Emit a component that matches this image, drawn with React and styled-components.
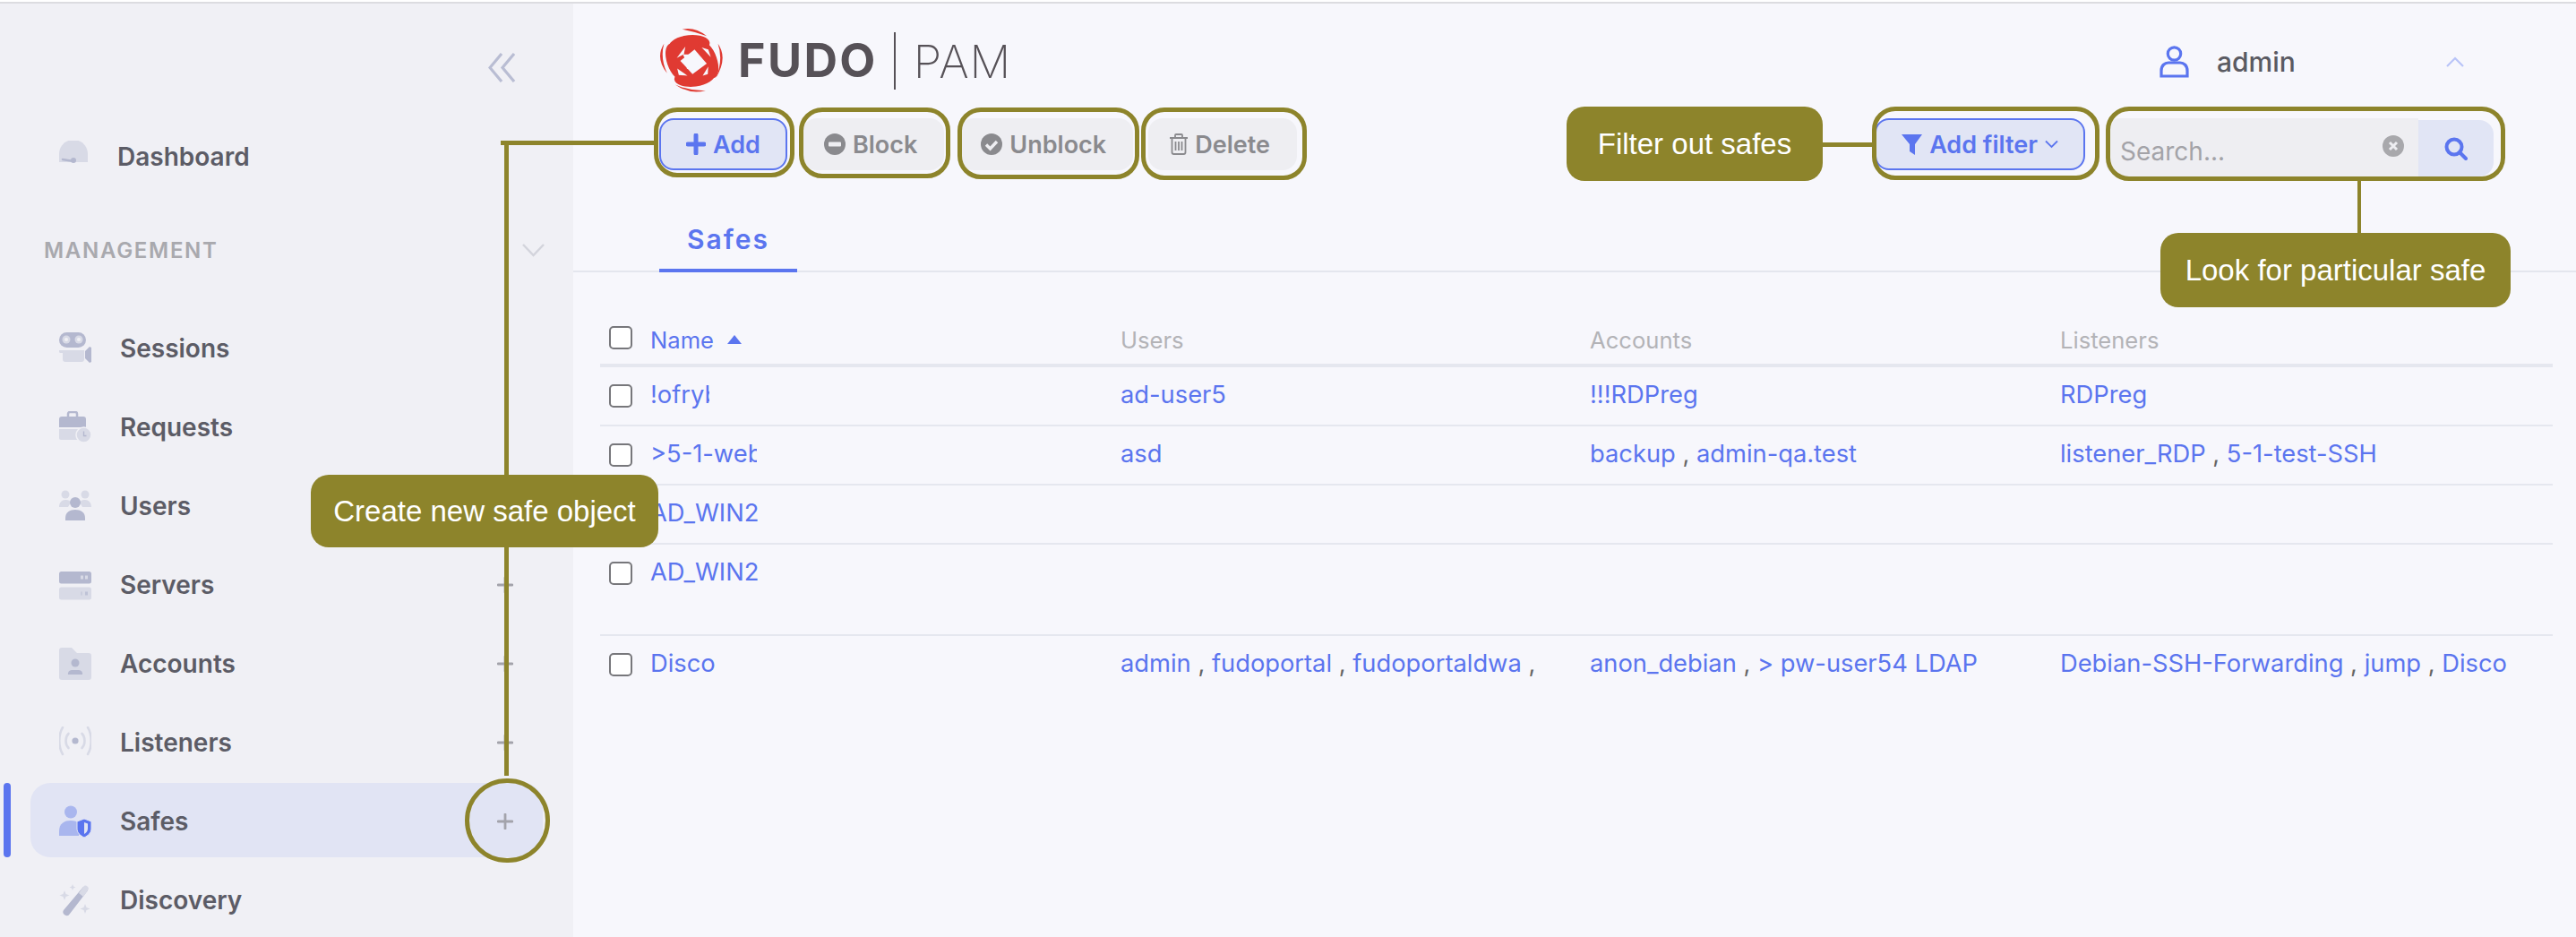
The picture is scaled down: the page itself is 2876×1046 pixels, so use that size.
import React from 'react';
import styled, { createGlobalStyle } from 'styled-components';

const BLUE = '#5b75ef';
const OLIVE = '#8d842b';
const DARK = '#b4b8cf';
const LIGHT = '#d8dae6';

const Global = createGlobalStyle`
  html, body { margin: 0; padding: 0; background: #f7f7fc; }
  body { font-family: Inter, "Liberation Sans", sans-serif; }
  * { box-sizing: border-box; }
`;

const Page = styled.div`
  position: relative;
  width: 2876px;
  height: 1046px;
  overflow: hidden;
  display: flex;
  flex-direction: column;
`;
const TopEdge = styled.div`
  height: 4px;
  flex: none;
  background: #fff;
  border-bottom: 2px solid #dcdce0;
`;
const Body = styled.div`
  flex: 1;
  display: flex;
  min-height: 0;
`;

/* ---------- sidebar ---------- */
const Sidebar = styled.aside`
  width: 640px;
  flex: none;
  background: #f0f0f5;
  display: flex;
  flex-direction: column;
`;
const SideHead = styled.div`
  height: 128px;
  flex: none;
  display: flex;
  justify-content: flex-end;
  padding: 55px 64px 0 0;
`;
const SectionRow = styled.div`
  height: 40px;
  margin: 44px 32px 47px 49px;
  display: flex;
  align-items: center;
  justify-content: space-between;
`;
const SectionTitle = styled.span`
  font-size: 24px;
  font-weight: 600;
  letter-spacing: 1.7px;
  color: #a9a9ae;
`;
const NavList = styled.nav`
  display: flex;
  flex-direction: column;
  gap: 5px;
`;
const NavRow = styled.div`
  height: 83px;
  display: flex;
  flex: none;
`;
const ActiveBar = styled.div`
  width: 8px;
  margin: 0 22px 0 4px;
  border-radius: 4px;
  background: ${(p) => (p.$on ? BLUE : 'transparent')};
`;
const Pill = styled.div`
  flex: 1;
  margin-right: 34px;
  padding: 3px 33px 0 32px;
  display: flex;
  align-items: center;
  border-radius: 22px;
  background: ${(p) => (p.$on ? '#e1e4f4' : 'transparent')};
`;
const NavIcon = styled.span`
  width: 36px;
  height: 36px;
  flex: none;
  display: flex;
`;
const NavLabel = styled.span`
  flex: 1;
  margin-left: ${(p) => p.$gap}px;
  font-size: 28px;
  font-weight: 600;
  color: #5c5c66;
`;
const PlusMark = styled.svg`
  width: 18px;
  height: 18px;
  flex: none;
`;

/* ---------- main ---------- */
const Main = styled.main`
  flex: 1;
  min-width: 0;
  display: flex;
  flex-direction: column;
  background: #f7f7fc;
`;
const Header = styled.header`
  height: 128px;
  flex: none;
  display: flex;
  justify-content: space-between;
  align-items: flex-start;
  padding: 28px 125px 0 96px;
`;
const Logo = styled.div`
  display: flex;
  align-items: center;
  height: 72px;
`;
const LogoWord = styled.span`
  font-family: Inter, sans-serif;
  font-size: 52px;
  line-height: 1;
  margin-left: 16px;
  font-weight: 700;
  letter-spacing: 2.4px;
  color: #565157;
`;
const LogoRule = styled.span`
  width: 2px;
  height: 64px;
  margin: 0 20px 0 18px;
  background: #565157;
`;
const LogoSub = styled.span`
  font-family: Inter, sans-serif;
  font-size: 51px;
  line-height: 1;
  font-weight: 200;
  letter-spacing: 0.8px;
  color: #565157;
`;
const UserBox = styled.div`
  display: flex;
  align-items: center;
  height: 56px;
  margin-top: 9px;
`;
const UserName = styled.span`
  margin-left: 31px;
  font-size: 30px;
  font-weight: 500;
  color: #5a5a62;
  width: 256px;
`;
const Toolbar = styled.div`
  height: 58px;
  flex: none;
  display: flex;
  justify-content: space-between;
  align-items: flex-start;
  padding: 0 92px 0 96px;
`;
const ButtonGroup = styled.div`
  display: flex;
  gap: 17px;
`;
const Button = styled.button`
  height: 58px;
  display: flex;
  align-items: center;
  gap: 8px;
  padding: ${(p) => (p.$primary ? '0 28px' : '0 30px 0 24px')};
  border-radius: 16px;
  border: ${(p) => (p.$primary ? `2px solid ${BLUE}` : 'none')};
  background: ${(p) => (p.$primary ? '#e1e5f5' : '#eeeef2')};
  color: ${(p) => (p.$primary ? BLUE : '#8a8a8e')};
  font: 600 27px Inter, sans-serif;
`;
const RightTools = styled.div`
  display: flex;
  gap: 23px;
  align-items: flex-start;
`;
const SearchBox = styled.form`
  display: flex;
  align-items: flex-start;
  margin: 0;
`;
const SearchField = styled.div`
  width: 349px;
  height: 65px;
  display: flex;
  align-items: flex-start;
  padding: 20px 16px 0 16px;
  border-radius: 16px 0 0 16px;
  background: #eeeef2;
`;
const SearchInput = styled.input`
  flex: 1;
  min-width: 0;
  border: 0;
  padding: 0;
  outline: 0;
  background: transparent;
  font: 400 28px Inter, sans-serif;
  &::placeholder { color: #a3a3a8; opacity: 1; }
`;
const ClearSlot = styled.span`
  margin-top: -1px;
  display: flex;
`;
const SearchButton = styled.button`
  width: 84px;
  height: 63px;
  margin-top: 2px;
  padding: 0;
  border: 0;
  border-radius: 0 16px 16px 0;
  background: #e1e5f5;
  display: flex;
  align-items: center;
  justify-content: center;
`;
const TabBar = styled.div`
  height: 114px;
  flex: none;
  display: flex;
  align-items: flex-end;
  padding-left: 96px;
  border-bottom: 2px solid #e4e6ee;
`;
const Tab = styled.div`
  width: 154px;
  height: 56px;
  margin-bottom: -2px;
  text-align: center;
  border-bottom: 4px solid ${BLUE};
  font-size: 30px;
  font-weight: 600;
  letter-spacing: 2px;
  line-height: 38px;
  color: ${BLUE};
`;
const Table = styled.div`
  margin: 48px 26px 0 30px;
`;
const Row = styled.div`
  display: grid;
  grid-template-columns: 56px 525px 524px 525px 1fr;
  height: ${(p) => p.$h}px;
  border-bottom: ${(p) => (p.$line === 0 ? 'none' : `${p.$line}px solid #e5e7ef`)};
`;
const Cell = styled.div`
  height: ${(p) => (p.$head ? 54 : 64)}px;
  padding-bottom: ${(p) => (p.$head ? 0 : 3)}px;
  font-size: ${(p) => (p.$head ? 25.6 : 27.3)}px;
  white-space: nowrap;
  color: ${(p) => (p.$muted ? '#b3b3b7' : BLUE)};
  display: flex;
  align-items: center;
`;
const CheckCell = styled.div`
  height: ${(p) => (p.$head ? 54 : 64)}px;
  padding-bottom: ${(p) => (p.$head ? 4 : 0)}px;
  display: flex;
  align-items: center;
`;
const Clip = styled.span`
  display: inline-block;
  overflow: hidden;
  width: ${(p) => p.$w}px;
`;
const Comma = styled.span`
  color: #666;
  white-space: pre;
`;
const Check = styled.span`
  width: 26px;
  height: 26px;
  margin-left: 10px;
  border: 2px solid #77777b;
  border-radius: 5px;
  background: #fff;
`;
const SortUp = styled.svg`
  width: 16px;
  height: 10px;
  margin-left: 15px;
`;

/* ---------- annotation overlay ---------- */
const Ring = styled.div`
  position: absolute;
  left: ${(p) => p.$x}px;
  top: ${(p) => p.$y}px;
  width: ${(p) => p.$w}px;
  height: ${(p) => p.$h}px;
  border: 5px solid ${OLIVE};
  border-radius: ${(p) => p.$r || 26}px;
`;
const Wire = styled.div`
  position: absolute;
  left: ${(p) => p.$x}px;
  top: ${(p) => p.$y}px;
  width: ${(p) => p.$w}px;
  height: ${(p) => p.$h}px;
  background: ${OLIVE};
`;
const Callout = styled.div`
  position: absolute;
  left: ${(p) => p.$x}px;
  top: ${(p) => p.$y}px;
  width: ${(p) => p.$w}px;
  height: ${(p) => p.$h}px;
  display: flex;
  align-items: center;
  justify-content: center;
  background: ${OLIVE};
  border-radius: 20px;
  color: #fff;
  font: 400 33px "Liberation Sans", Arial, sans-serif;
`;

/* ---------- icons ---------- */
const Ico = ({ children, vb = '0 0 36 36', w = 36, h = 36 }) => (
  <svg width={w} height={h} viewBox={vb} style={{ display: 'block', flex: 'none' }}>{children}</svg>
);

const Gauge = () => (
  <Ico vb="0 0 36 36">
    <path d="M0 25V16C0 7 7 0 16 0s16 7 16 16v9z" transform="translate(0 -1)" fill={LIGHT} />
    <path d="M4 21l12 2" stroke={DARK} strokeWidth="2.500" strokeLinecap="round" />
    <circle cx="16" cy="22" r="3" fill={DARK} />
  </Ico>
);
const Camera = () => (
  <Ico>
    <rect x="0" y="0" width="30" height="17" rx="8.500" fill={DARK} />
    <circle cx="8" cy="8" r="4.500" fill={LIGHT} /><circle cx="8" cy="8" r="2" fill="#f0f0f5" />
    <circle cx="22" cy="8" r="4.500" fill={LIGHT} /><circle cx="22" cy="8" r="2" fill="#f0f0f5" />
    <path d="M0 20h28v10a3 3 0 0 1-3 3H7a3 3 0 0 1-3-3v-7H1a1.500 1.500 0 0 1-1-1.500z" fill={LIGHT} />
    <path d="M36 17v16l-2 1-5-5v-8l5-5z" fill={DARK} />
  </Ico>
);
const Briefcase = () => (
  <Ico>
    <path d="M10 6V3a2 2 0 0 1 2-2h6a2 2 0 0 1 2 2v3" fill="none" stroke={DARK} strokeWidth="2.500" />
    <path d="M0 9a3 3 0 0 1 3-3h24a3 3 0 0 1 3 3v9H0z" fill={DARK} />
    <path d="M0 20h24v12H2a2 2 0 0 1-2-2z" fill={LIGHT} />
    <circle cx="27.500" cy="26.500" r="8.500" fill={LIGHT} stroke="#f0f0f5" strokeWidth="1.500" />
    <path d="M27.500 22.500v5h3" stroke={DARK} strokeWidth="1.300" fill="none" />
  </Ico>
);
const People = () => (
  <Ico>
    <circle cx="7" cy="5" r="4.500" fill={LIGHT} /><circle cx="29" cy="5" r="4.500" fill={LIGHT} />
    <path d="M0 19c0-5 3-8 7-8s5 1 6 3l-3 5zM36 19c0-5-3-8-7-8s-5 1-6 3l3 5z" fill={LIGHT} />
    <circle cx="18" cy="14" r="6" fill={DARK} />
    <path d="M7 34v-3c0-6 5-9 11-9s11 3 11 9v3z" fill={DARK} />
  </Ico>
);
const Servers = () => (
  <Ico>
    <rect y="3" width="36" height="13.500" rx="2.500" fill={DARK} />
    <rect x="24" y="7.500" width="3" height="4" fill={LIGHT} /><rect x="29" y="7.500" width="3" height="4" fill={LIGHT} />
    <rect y="20.500" width="36" height="14" rx="2.500" fill={LIGHT} />
    <rect x="24" y="25.500" width="2" height="4" fill={DARK} opacity=".4" /><rect x="29" y="25.500" width="3" height="4" fill={DARK} opacity=".7" />
  </Ico>
);
const Folder = () => (
  <Ico>
    <path d="M0 3a3 3 0 0 1 3-3h11l6 6h13a3 3 0 0 1 3 3v24a3 3 0 0 1-3 3H3a3 3 0 0 1-3-3z" fill={LIGHT} />
    <circle cx="18" cy="17" r="4.500" fill={DARK} />
    <path d="M10 30a4 4 0 0 1 4-5h8a4 4 0 0 1 4 5z" fill={DARK} />
  </Ico>
);
const Signal = () => (
  <Ico>
    <circle cx="18" cy="16" r="3.600" fill={DARK} />
    <g fill="none" stroke={LIGHT} strokeWidth="2.600" strokeLinecap="round">
      <path d="M10.500 8c-4 4-4 12 0 16M25.500 8c4 4 4 12 0 16" />
      <path d="M4 1C-1 9-1 23 4 31M32 1c5 8 5 22 0 30" />
    </g>
  </Ico>
);
const SafeIco = () => (
  <Ico>
    <circle cx="13" cy="7.500" r="7" fill="#a9b6ee" />
    <path d="M0 34v-5c0-9 6-12 13-12 4 0 7 1 9 3v14z" fill="#a9b6ee" />
    <path d="M28 15l8 3v8c0 5-4 8-8 10-4-2-8-5-8-10v-8z" fill={BLUE} stroke="#e1e4f4" strokeWidth="1" />
    <path d="M28 19l4 1.600V26c0 3-2 4.800-4 6z" fill="#e1e4f4" />
  </Ico>
);
const Wand = () => (
  <Ico>
    <path d="M27 3l5 4-20 26a4 4 0 0 1-7-4z" fill={DARK} />
    <path d="M27 3a3 3 0 0 1 5 4l-5 7-5-4z" fill={LIGHT} />
    <path d="M6 7l1.500 4 4 1.500-4 1.500L6 18l-1.500-4-4-1.500 4-1.500zM15 0l1 2.500 2.500 1-2.500 1L15 7l-1-2.500-2.500-1 2.500-1zM29 22l1.500 4 4 1.500-4 1.500-1.500 4-1.500-4-4-1.500 4-1.500z" fill={LIGHT} />
  </Ico>
);
const Plus = () => (
  <PlusMark viewBox="0 0 18 18">
    <path d="M9 1v16M1 9h16" stroke="#a3a3ab" strokeWidth="2.800" strokeLinecap="round" />
  </PlusMark>
);

const RED = '#e03a32';
const LogoMark = () => (
  <svg width="72" height="72" viewBox="0 0 72 72" style={{ flex: 'none' }}>
    <g transform="translate(-3.700 -2.400) scale(1.135 1.064)">
      <g fill={RED}>
        <ellipse cx="33" cy="19" rx="20" ry="10" transform="rotate(-6 33 19)" />
        <ellipse cx="51" cy="35" rx="20" ry="9" transform="rotate(72 51 35)" />
        <ellipse cx="38" cy="53" rx="20" ry="10" transform="rotate(-8 38 53)" />
        <ellipse cx="20" cy="37" rx="20" ry="9" transform="rotate(72 20 37)" />
        <path d="M26 3Q38 0 50 10Q38 5.500 26 3z" />
        <path d="M61 18Q71 33 59 54Q66.500 35 61 18z" />
        <path d="M19 61Q34 72 49 67Q34 68 19 61z" />
        <path d="M8 18Q-1 33 11 49Q4 33 8 18z" />
      </g>
      <g fill="#f7f7fc">
        <path d="M38 24L50 39 36 50 24 36z" />
        <path d="M29 21L20.500 33 27.500 29z" />
        <path d="M45 22L54 32 51.500 24z" />
        <path d="M21 44L31 51.500 22.500 51z" />
        <path d="M51.500 42L46 51.500 51 50z" />
      </g>
    </g>
  </svg>
);

const rows = [
  { name: '!ofryby', clip: 66, users: ['ad-user5'], accounts: ['!!!RDPreg'], listeners: ['RDPreg'], h: 66, line: 2 },
  { name: '>5-1-web-test', clip: 119, users: ['asd'], accounts: ['backup', 'admin-qa.test'], listeners: ['listener_RDP', '5-1-test-SSH'], h: 66, line: 2 },
  { name: 'AD_WIN2', users: [], accounts: [], listeners: [], h: 66, line: 2 },
  { name: 'AD_WIN2', users: [], accounts: [], listeners: [], h: 102, line: 2 },
  { name: 'Disco', users: ['admin', 'fudoportal', 'fudoportaldwa', ''], accounts: ['anon_debian', '> pw-user54 LDAP'], listeners: ['Debian-SSH-Forwarding', 'jump', 'Disco'], h: 66, line: 0 },
];

const Links = ({ items }) => (
  <Cell>
    <span>
      {items.map((t, i) => (
        <React.Fragment key={i}>
          {i > 0 && <Comma> , </Comma>}
          {t}
        </React.Fragment>
      ))}
    </span>
  </Cell>
);

const nav = [
  ['Sessions', Camera],
  ['Requests', Briefcase],
  ['Users', People],
  ['Servers', Servers, true],
  ['Accounts', Folder, true],
  ['Listeners', Signal, true],
  ['Safes', SafeIco, true, true],
  ['Discovery', Wand],
];

export default function App() {
  return (
    <Page>
      <Global />
      <TopEdge />
      <Body>
        <Sidebar>
          <SideHead>
            <Ico w={31} h={33} vb="0 0 31 33">
              <path d="M15 1L2 16.500 15 32M29 1L16 16.500 29 32" fill="none" stroke="#b9bdd3" strokeWidth="3.200" />
            </Ico>
          </SideHead>
          <NavRow>
            <ActiveBar />
            <Pill>
              <NavIcon><Gauge /></NavIcon>
              <NavLabel $gap={29}>Dashboard</NavLabel>
            </Pill>
          </NavRow>
          <SectionRow>
            <SectionTitle>MANAGEMENT</SectionTitle>
            <Ico w={25} h={15} vb="0 0 25 15">
              <path d="M1 1l11.500 12L24 1" fill="none" stroke="#d3d4dc" strokeWidth="2.500" />
            </Ico>
          </SectionRow>
          <NavList>
            {nav.map(([label, Icon, plus, on]) => (
              <NavRow key={label}>
                <ActiveBar $on={on} />
                <Pill $on={on}>
                  <NavIcon><Icon /></NavIcon>
                  <NavLabel $gap={32}>{label}</NavLabel>
                  {plus && <Plus />}
                </Pill>
              </NavRow>
            ))}
          </NavList>
        </Sidebar>

        <Main>
          <Header>
            <Logo>
              <LogoMark />
              <LogoWord>FUDO</LogoWord>
              <LogoRule />
              <LogoSub>PAM</LogoSub>
            </Logo>
            <UserBox>
              <Ico w={33} h={36} vb="0 0 33 36">
                <circle cx="16.500" cy="9" r="7.200" fill="none" stroke={BLUE} strokeWidth="3.200" />
                <path d="M2 34v-6c0-6 4-9 8-9h13c4 0 8 3 8 9v6z" fill="none" stroke={BLUE} strokeWidth="3.200" />
              </Ico>
              <UserName>admin</UserName>
              <Ico w={20} h={12} vb="0 0 20 12">
                <path d="M1 11l9-9 9 9" fill="none" stroke="#b9c4f8" strokeWidth="2.200" />
              </Ico>
            </UserBox>
          </Header>

          <Toolbar>
            <ButtonGroup>
              <Button $primary>
                <Ico w={22} h={24} vb="0 0 22 24">
                  <path d="M11 2v20M2 12h18" stroke={BLUE} strokeWidth="5" strokeLinecap="round" />
                </Ico>
                Add
              </Button>
              <Button>
                <Ico w={24} h={24} vb="0 0 24 24">
                  <circle cx="12" cy="12" r="12" fill="#8a8a8e" />
                  <rect x="5" y="9.500" width="14" height="5" rx="1" fill="#eeeef2" />
                </Ico>
                Block
              </Button>
              <Button>
                <Ico w={24} h={24} vb="0 0 24 24">
                  <circle cx="12" cy="12" r="12" fill="#8a8a8e" />
                  <path d="M6 12.500l4.500 4.500L18 9" fill="none" stroke="#eeeef2" strokeWidth="3.400" />
                </Ico>
                Unblock
              </Button>
              <Button>
                <Ico w={20} h={24} vb="0 0 20 24">
                  <g fill="none" stroke="#8a8a8e" strokeWidth="1.800">
                    <path d="M0 5h20M6 5V2a1 1 0 0 1 1-1h6a1 1 0 0 1 1 1v3" />
                    <path d="M2.500 5v16a2 2 0 0 0 2 2h11a2 2 0 0 0 2-2V5" />
                    <path d="M6.500 9v10M10 9v10M13.500 9v10" />
                  </g>
                </Ico>
                Delete
              </Button>
            </ButtonGroup>
            <RightTools>
              <Button $primary>
                <Ico w={23} h={24} vb="0 0 23 24">
                  <path d="M0 1h23L15 12v12l-6-4v-8z" fill={BLUE} />
                </Ico>
                Add filter
                <Ico w={15} h={10} vb="0 0 15 10">
                  <path d="M1 1.500l6.500 6.500 6.500-6.500" fill="none" stroke={BLUE} strokeWidth="1.800" />
                </Ico>
              </Button>
              <SearchBox>
                <SearchField>
                  <SearchInput placeholder="Search..." />
                  <ClearSlot>
                    <Ico w={24} h={24} vb="0 0 24 24">
                      <circle cx="12" cy="12" r="12" fill="#a8a8ac" />
                      <path d="M8 8l8 8M16 8l-8 8" stroke="#eeeef2" strokeWidth="3" />
                    </Ico>
                  </ClearSlot>
                </SearchField>
                <SearchButton type="button" aria-label="Search">
                  <Ico w={26} h={26} vb="0 0 26 26">
                    <circle cx="11" cy="11" r="8.500" fill="none" stroke={BLUE} strokeWidth="4" />
                    <path d="M17 17l7 7" stroke={BLUE} strokeWidth="4" strokeLinecap="round" />
                  </Ico>
                </SearchButton>
              </SearchBox>
            </RightTools>
          </Toolbar>

          <TabBar><Tab>Safes</Tab></TabBar>

          <Table>
            <Row $line={4} $h={58}>
              <CheckCell $head><Check /></CheckCell>
              <Cell $head>
                Name
                <SortUp viewBox="0 0 16 10"><path d="M8 0l8 10H0z" fill={BLUE} /></SortUp>
              </Cell>
              <Cell $head $muted>Users</Cell>
              <Cell $head $muted>Accounts</Cell>
              <Cell $head $muted>Listeners</Cell>
            </Row>
            {rows.map((r, i) => (
              <Row key={i} $h={r.h} $line={r.line}>
                <CheckCell><Check /></CheckCell>
                <Cell>{r.clip ? <Clip $w={r.clip}>{r.name}</Clip> : r.name}</Cell>
                <Links items={r.users} />
                <Links items={r.accounts} />
                <Links items={r.listeners} />
              </Row>
            ))}
          </Table>
        </Main>
      </Body>

      <Wire $x={559} $y={157} $w={172} $h={5} />
      <Wire $x={563} $y={157} $w={5} $h={709} />
      <Wire $x={2035} $y={159} $w={56} $h={5} />
      <Wire $x={2632} $y={202} $w={4} $h={58} />
      <Ring $x={730} $y={120} $w={157} $h={78} />
      <Ring $x={892} $y={120} $w={169} $h={79} />
      <Ring $x={1069} $y={120} $w={203} $h={80} />
      <Ring $x={1274} $y={120} $w={185} $h={81} />
      <Ring $x={2090} $y={119} $w={254} $h={82} />
      <Ring $x={2351} $y={119} $w={446} $h={83} />
      <Ring $x={519} $y={869} $w={95} $h={94} $r={48} />
      <Callout $x={1749} $y={119} $w={286} $h={83}>Filter out safes</Callout>
      <Callout $x={2412} $y={260} $w={391} $h={83}>Look for particular safe</Callout>
      <Callout $x={347} $y={530} $w={388} $h={81}>Create new safe object</Callout>
    </Page>
  );
}
